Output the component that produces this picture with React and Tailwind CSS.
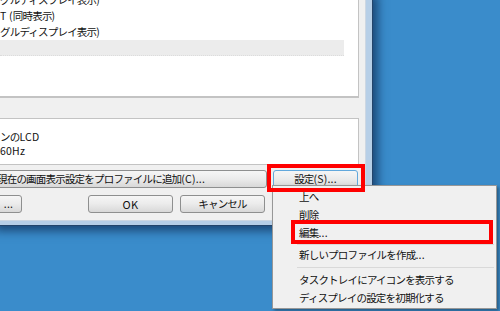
import React from 'react';

const Btn = ({ className = '', children }) => (
  <div
    className={`h-[18px] flex items-center justify-center rounded-[3px] border border-[#8e8f8f] bg-linear-to-b from-[#f6f6f6] via-[#ebebeb] to-[#d8d8d8] ${className}`}
  >
    {children}
  </div>
);

const MenuItem = ({ children }) => (
  <div className="h-[18px] leading-[18px] pl-[26px] whitespace-nowrap">{children}</div>
);

const Separator = ({ className = '' }) => (
  <div className={`flex items-center pl-[24px] pr-[2px] ${className}`}>
    <div className="h-px w-full bg-[#d9d9d9]" />
  </div>
);

// latin runs are set a bit wider than the kana
const L = ({ children }) => <span className="tracking-[0.2px]">{children}</span>;

export default function App() {
  return (
    <div className="relative w-[500px] h-[311px] overflow-hidden bg-[#3a8ccb] font-['Noto_Sans_CJK_JP','Noto_Sans',sans-serif] text-[10.5px] tracking-[-0.8px] text-[#111]">
      {/* dialog window */}
      <div className="w-[373px] h-[226px] bg-[#b7cfe7] pr-[6px] pb-[4px] border-r border-b border-[#24456b] shadow-[0_0_9px_5px_rgba(16,45,85,0.7)]">
        <div className="h-full bg-[#f0f0f0] flex flex-col border-r border-b border-[#cdd7e2]">
          {/* display list */}
          <div className="w-[359px] h-[98px] shrink-0 bg-white border-r border-b-2 border-[#c3c3c3] overflow-hidden">
            <div className="-mt-[8px] flex flex-col">
              <div className="h-[16px] leading-[16px] whitespace-nowrap">グルディスプレイ表示)</div>
              <div className="h-[16px] leading-[16px] whitespace-nowrap"><L>T (</L>同時表示)</div>
              <div className="h-[16px] leading-[16px] whitespace-nowrap">グルディスプレイ表示)</div>
              <div className="h-[16px] w-[344px] bg-[#ececec] border-b border-dotted border-[#dcdcdc]" />
            </div>
          </div>

          {/* current display */}
          <div className="mt-[20px] w-[359px] h-[47px] shrink-0 bg-white border-t border-r border-b border-[#c3c3c3] pt-[11px] overflow-hidden">
            <div className="h-[14px] leading-[14px] whitespace-nowrap">ンの<L>LCD</L></div>
            <div className="h-[14px] leading-[14px] whitespace-nowrap"><L>60Hz</L></div>
          </div>

          {/* buttons */}
          <div className="mt-[5px] flex gap-[6px]">
            <Btn className="-ml-[5px] w-[272px] justify-start! pl-[1px]">
              <span className="whitespace-nowrap">現在の画面表示設定をプロファイルに追加<L>(C)...</L></span>
            </Btn>
            <Btn className="w-[85px] border-[#62a8dc]">設定<L>(S)...</L></Btn>
          </div>
          <div className="mt-[7px] flex">
            <Btn className="-ml-[5px] w-[27px]"><L>...</L></Btn>
            <Btn className="ml-[66px] w-[85px]"><span className="text-[11px] tracking-[0.3px]">OK</span></Btn>
            <Btn className="ml-[7px] w-[85px]">キャンセル</Btn>
          </div>
        </div>
      </div>

      {/* context menu */}
      <div className="absolute left-[272px] top-[185px] w-[225px] bg-[#f0f0f0] border border-[#979797] pt-[2px] pb-[1px] shadow-[2px_2px_3px_rgba(0,0,0,0.35)]">
        <MenuItem>上へ</MenuItem>
        <MenuItem>削除</MenuItem>
        <MenuItem>編集<L>...</L></MenuItem>
        <Separator className="h-[4px]" />
        <MenuItem>新しいプロファイルを作成<L>...</L></MenuItem>
        <Separator className="h-[7px]" />
        <MenuItem>タスクトレイにアイコンを表示する</MenuItem>
        <MenuItem>ディスプレイの設定を初期化する</MenuItem>
      </div>

      {/* highlight boxes */}
      <div className="absolute left-[267px] top-[164px] w-[98px] h-[28px] border-[4px] border-[#ff0000]" />
      <div className="absolute left-[291px] top-[220px] w-[202px] h-[24px] border-[4px] border-[#ff0000]" />
    </div>
  );
}
